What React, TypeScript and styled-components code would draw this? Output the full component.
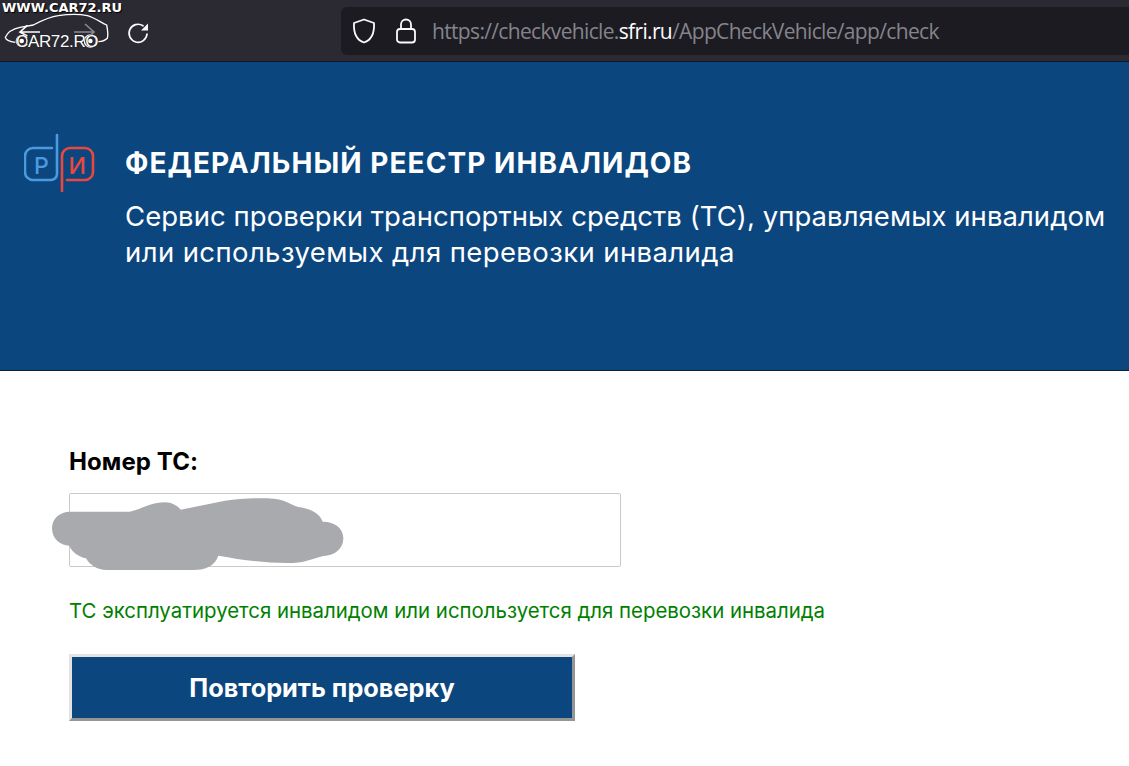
import React from "react";
import styled, { createGlobalStyle } from "styled-components";

const GlobalStyle = createGlobalStyle`
  html, body {
    margin: 0;
    padding: 0;
    background: #fff;
    font-family: "Inter", "Liberation Sans", sans-serif;
  }
`;

const Toolbar = styled.div`
  position: relative;
  display: flex;
  align-items: center;
  height: 61px;
  background: #2b2a33;
  border-bottom: 1px solid #0c1a2c;
`;

const Watermark = styled.div`
  position: absolute;
  left: 2px;
  top: 0;
  font-family: "DejaVu Sans", sans-serif;
  font-size: 13px;
  line-height: 16px;
  font-weight: 700;
  color: #fff;
  text-shadow: 1px 1px 1px #000;
`;

const LogoSlot = styled.div`
  position: relative;
  width: 115px;
  height: 61px;
  flex-shrink: 0;
`;

const LogoText = styled.span`
  position: absolute;
  left: 16px;
  top: 32px;
  font-family: "Liberation Sans", sans-serif;
  font-size: 17px;
  line-height: 20px;
  letter-spacing: -0.35px;
  color: #fff;
  text-shadow: 0 0 1px #000;
`;

const ToolIcon = styled.div<{ $gap: number; $drop?: number }>`
  display: flex;
  width: 24px;
  height: 26px;
  align-items: center;
  justify-content: center;
  margin-left: ${(p) => p.$gap}px;
  margin-top: ${(p) => p.$drop ?? 0}px;
  flex-shrink: 0;
`;

const UrlBar = styled.div`
  display: flex;
  align-items: center;
  flex: 1;
  height: 48px;
  margin-left: 191px;
  margin-top: 1px;
  background: #1c1b22;
  border-radius: 6px 0 0 6px;
`;

const UrlText = styled.span`
  margin-left: 14px;
  font-family: "Open Sans", sans-serif;
  font-size: 21px;
  letter-spacing: -0.66px;
  color: #85848b;
`;

const UrlHost = styled.span`
  color: #fbfbfe;
`;

const Banner = styled.header`
  display: flex;
  align-items: flex-start;
  height: 309px;
  padding: 70px 20px 0 24px;
  box-sizing: border-box;
  background: #0b467f;
  border-bottom: 1px solid #10202e;
`;

const BannerLogo = styled.svg`
  flex-shrink: 0;
  margin-right: 30px;
`;

const BannerText = styled.div`
  display: flex;
  flex-direction: column;
  color: #fff;
`;

const BannerTitle = styled.div`
  margin-top: 15px;
  font-size: 28px;
  line-height: 32px;
  font-weight: 700;
  letter-spacing: 1.06px;
  white-space: nowrap;
`;

const BannerSubtitle = styled.div`
  margin-top: 19px;
  font-size: 27.5px;
  line-height: 36px;
  font-weight: 400;
  white-space: nowrap;
`;

const SubtitleLine = styled.div<{ $spacing: number }>`
  letter-spacing: ${(p) => p.$spacing}px;
`;

const Form = styled.main`
  display: flex;
  flex-direction: column;
  align-items: flex-start;
  padding: 77px 0 45px 69px;
`;

const Label = styled.label`
  font-size: 24px;
  line-height: 28px;
  font-weight: 700;
  letter-spacing: 0.1px;
  color: #000;
`;

const InputWrap = styled.div`
  position: relative;
  width: 550px;
  height: 72px;
  margin-top: 17px;
  border: 1px solid #c9c9c9;
  border-radius: 2px;
  background: #fff;
`;

const Scribble = styled.svg`
  position: absolute;
  left: -30px;
  top: -9px;
  pointer-events: none;
`;

const Status = styled.div`
  margin-top: 32px;
  font-size: 20.4px;
  line-height: 24px;
  color: #008000;
`;

const Repeat = styled.button`
  width: 506px;
  height: 67px;
  margin-top: 31px;
  padding: 0;
  box-sizing: border-box;
  border-width: 3px;
  border-style: solid;
  border-color: #e3e3e3 #959595 #959595 #e3e3e3;
  background: #0b467f;
  color: #fff;
  font-family: inherit;
  font-size: 25.3px;
  font-weight: 700;
`;

export default function App() {
  return (
    <>
      <GlobalStyle />
      <Toolbar>
        <Watermark>WWW.CAR72.RU</Watermark>
        <LogoSlot>
          <svg width="115" height="61" viewBox="0 0 345 183" fill="none">
            <path
              d="M60 82L100 75C125 62 150 50 175 47C200 43 235 41 262 47C280 52 300 65 320 75C323 90 325 105 322 115C315 122 305 125 295 125M60 82C40 86 22 98 16 112C18 122 30 125 46 127"
              stroke="#fff"
              strokeWidth="4"
            />
            <circle cx="65" cy="123" r="16" stroke="#fff" strokeWidth="4" />
            <circle cx="65" cy="123" r="7" fill="#fff" />
            <circle cx="271" cy="123" r="18" stroke="#fff" strokeWidth="4" />
            <circle cx="271" cy="123" r="7" fill="#fff" />
            <path d="M120 96H60M82 76L60 96L82 108" stroke="#fff" strokeWidth="5" />
            <path d="M222 96H282M255 72L282 96L258 118" stroke="#8a898f" strokeWidth="5" />
          </svg>
          <LogoText>CAR72.RO</LogoText>
        </LogoSlot>
        <ToolIcon $gap={11} $drop={5}>
          <svg width="24" height="24" viewBox="0 0 24 24" fill="none">
            <path
              d="M21 13a9 9 0 1 1-4-8.2"
              stroke="#fbfbfe"
              strokeWidth="1.7"
              strokeLinecap="round"
            />
            <path d="M22 2.5v7h-7z" fill="#fbfbfe" />
          </svg>
        </ToolIcon>
        <UrlBar>
          <ToolIcon $gap={11}>
            <svg width="24" height="26" viewBox="0 0 24 26" fill="none">
              <path
                d="M12 1.5l10 3.5c.5 9-1 16.500-10 19.500C3 21.500 1.500 14 2 5z"
                stroke="#fbfbfe"
                strokeWidth="1.8"
                strokeLinejoin="round"
              />
            </svg>
          </ToolIcon>
          <ToolIcon $gap={18}>
            <svg width="22" height="26" viewBox="0 0 22 26" fill="none">
              <rect x="2" y="11" width="18" height="13.500" rx="3" stroke="#fbfbfe" strokeWidth="1.8" />
              <path d="M6 11V6.500a5 5 0 0 1 10 0V11" stroke="#fbfbfe" strokeWidth="1.8" />
            </svg>
          </ToolIcon>
          <UrlText>
            https://checkvehicle.<UrlHost>sfri.ru</UrlHost>/AppCheckVehicle/app/check
          </UrlText>
        </UrlBar>
      </Toolbar>

      <Banner>
        <BannerLogo width="71" height="60" viewBox="0 0 71 60" fill="none">
          <path
            d="M28 16H9a8 8 0 0 0-8 8v16a8 8 0 0 0 8 8h18a6 6 0 0 0 6-6V3"
            stroke="#4b9ae0"
            strokeWidth="2.6"
            strokeLinecap="round"
          />
          <path
            d="M38 59V24a8 8 0 0 1 8-8h15a8 8 0 0 1 8 8v16a8 8 0 0 1-8 8H43"
            stroke="#e8483f"
            strokeWidth="2.6"
            strokeLinecap="round"
          />
          <text x="10" y="41.5" fontFamily="Inter, sans-serif" fontSize="23" fontWeight="500" fill="#4b9ae0">
            Р
          </text>
          <text x="44.5" y="41.5" fontFamily="Inter, sans-serif" fontSize="23" fontWeight="500" fill="#e8483f">
            И
          </text>
        </BannerLogo>
        <BannerText>
          <BannerTitle>ФЕДЕРАЛЬНЫЙ РЕЕСТР ИНВАЛИДОВ</BannerTitle>
          <BannerSubtitle>
            <SubtitleLine $spacing={0.05}>
              Сервис проверки транспортных средств (ТС), управляемых инвалидом
            </SubtitleLine>
            <SubtitleLine $spacing={0.4}>или используемых для перевозки инвалида</SubtitleLine>
          </BannerSubtitle>
        </BannerText>
      </Banner>

      <Form>
        <Label>Номер ТС:</Label>
        <InputWrap>
          <Scribble width="320" height="95" viewBox="0 0 960 285" fill="#a9aaad">
            <path d="M90 80L270 80C310 70 335 52 375 52C395 52 412 62 422 74L555 47C600 40 660 38 700 41C735 44 750 58 775 66C815 72 838 85 848 110C885 110 910 130 910 160C910 190 885 213 850 213C820 220 800 232 760 234C680 236 610 225 535 212C525 240 500 255 460 255L200 255C170 255 150 240 138 220C115 215 95 200 88 182C60 182 36 160 36 130C36 100 60 80 90 80Z" />
          </Scribble>
        </InputWrap>
        <Status>ТС эксплуатируется инвалидом или используется для перевозки инвалида</Status>
        <Repeat type="button">Повторить проверку</Repeat>
      </Form>
    </>
  );
}
